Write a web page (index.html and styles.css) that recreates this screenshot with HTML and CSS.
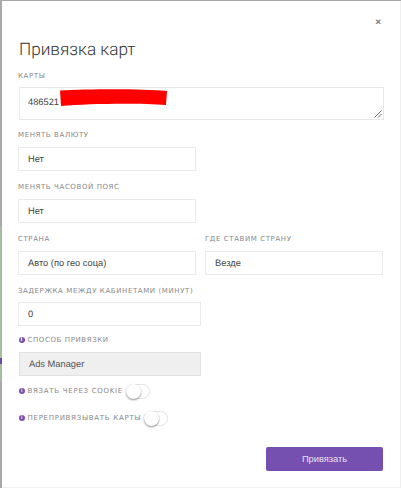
FILE: index.html
```html
<!DOCTYPE html>
<html lang="ru">
<head>
<meta charset="utf-8">
<title>Привязка карт</title>
<link rel="stylesheet" href="styles.css">
</head>
<body>
<div class="modal">
  <div class="close-row"><span class="close">×</span></div>
  <h1 class="title">Привязка карт</h1>
  <div class="label label-first">Карты</div>
  <div class="textarea-wrap">
    <div class="textarea">486521</div>
    <svg class="redact" width="110" height="18" viewBox="0 0 110 18"><path d="M1 1.500 C30 0 80 -0.500 108 2 L107 16 C80 14 30 14.500 2 17 Z" fill="#ff0000"/></svg>
    <svg class="grip" width="8" height="8" viewBox="0 0 8 8"><path d="M0.500 7.500 L7.500 0.500 M4 7.500 L7.500 4" stroke="#444" stroke-width="0.8" fill="none"/></svg>
  </div>
  <div class="label">Менять валюту</div>
  <div class="field half">Нет</div>
  <div class="label">Менять часовой пояс</div>
  <div class="field half">Нет</div>
  <div class="two-col">
    <div class="col-left">
      <div class="label">Страна</div>
      <div class="field">Авто (по гео соца)</div>
    </div>
    <div class="col-right">
      <div class="label">Где ставим страну</div>
      <div class="field">Везде</div>
    </div>
  </div>
  <div class="label label-delay">Задержка между кабинетами (минут)</div>
  <div class="field delay">0</div>
  <div class="label info-label"><span class="info">i</span>Способ привязки</div>
  <div class="field disabled">Ads Manager</div>
  <div class="toggle-row first-toggle"><span class="info">i</span><span class="label-inline">Вязать через cookie</span><span class="toggle"></span></div>
  <div class="toggle-row"><span class="info">i</span><span class="label-inline">Перепривязывать карты</span><span class="toggle"></span></div>
  <div class="footer"><button class="submit" type="button">Привязать</button></div>
</div>
</body>
</html>
```
FILE: styles.css
```css
* { box-sizing: border-box; }
html, body { margin: 0; height: 100%; }
body {
  background: linear-gradient(to bottom,
    #a9a9a9 0, #a9a9a9 226px,
    #a3bd9e 226px, #a3bd9e 358px,
    #6c4aa8 358px, #6c4aa8 364px,
    #a3bd9e 364px, #a3bd9e 381px,
    #a9a9a9 381px, #a9a9a9 100%);
  padding: 1px 0 0 2px;
  font-family: "Liberation Sans", Arial, sans-serif;
  overflow: hidden;
  text-rendering: geometricPrecision;
}
.modal {
  background: #fff;
  height: 487px;
  padding: 0 16px 0 16px;
  border-right: 1px solid #efefef;
  border-bottom: 1px solid #efefef;
  color: #444;
}
.close-row { height: 26px; display: flex; justify-content: flex-end; padding: 15px 0 0; }
.close { font-size: 10px; line-height: 14px; color: #777; margin-right: 3px; font-weight: 700; }
.title {
  margin: 11px 0 0 1px;
  font-family: Roboto, sans-serif;
  font-weight: 300;
  font-size: 17.2px;
  line-height: 24px;
  color: #333;
}
.label {
  font-family: "DejaVu Sans", sans-serif;
  font-size: 7px;
  line-height: 10px;
  letter-spacing: 0.6px;
  text-transform: uppercase;
  color: #888;
  margin: 11px 0 7px;
}
.label-first { margin: 9px 0 6px; }
.label-delay { margin-bottom: 6px; }
.textarea-wrap { position: relative; margin-left: 1px; }
.textarea {
  height: 33px;
  border: 1px solid #e8e8e8;
  padding: 6px 8px;
  font-size: 9.300px;
  line-height: 16px;
  color: #444;
}
.textarea-wrap + .label { margin-top: 10px; }
.redact { position: absolute; left: 40px; top: 2px; }
.grip { position: absolute; right: 2px; bottom: 2px; }
.field {
  height: 24px;
  border: 1px solid #ebebeb;
  padding: 0 9px;
  font-size: 9.300px;
  line-height: 22px;
  color: #444;
}
.half { width: 178px; }
.two-col { display: flex; gap: 9px; }
.col-left { width: 178px; }
.col-right { width: 178px; }
.delay { width: 183px; }
.info-label { display: flex; align-items: center; margin-top: 9px; }
.info {
  display: inline-block;
  width: 6.500px;
  height: 6.500px;
  border-radius: 50%;
  background: #7650b0;
  color: #fff;
  font-size: 5px;
  line-height: 6.500px;
  font-weight: 700;
  text-align: center;
  margin: 0 2.500px 0 0.500px;
  flex: none;
}
.disabled {
  width: 182px;
  margin-left: 1px;
  background: #efefef;
  border-color: #e2e2e2;
  color: #555;
}
.toggle-row { display: flex; align-items: center; height: 16px; margin-top: 11px; }
.first-toggle { margin-top: 7px; }
.label-inline {
  font-family: "DejaVu Sans", sans-serif;
  font-size: 7px;
  letter-spacing: 0.72px;
  text-transform: uppercase;
  color: #888;
}
.toggle {
  position: relative;
  width: 24px;
  height: 15px;
  margin-left: 3px;
  border: 1px solid #e3e3e3;
  border-radius: 8px;
  background: #fff;
}
.toggle::before {
  content: "";
  position: absolute;
  left: -1px;
  top: -1px;
  width: 15px;
  height: 15px;
  border-radius: 50%;
  background: #fff;
  box-shadow: 0 1px 2px rgba(0,0,0,.45);
}
.footer { display: flex; justify-content: flex-end; margin-top: 21px; padding-right: 1px; }
.submit {
  width: 117px;
  height: 24px;
  border: 0;
  border-radius: 2px;
  background: #7650b0;
  color: #e8e0f4;
  font-family: "Liberation Sans", Arial, sans-serif;
  font-size: 9.300px;
  padding: 0;
}
```
